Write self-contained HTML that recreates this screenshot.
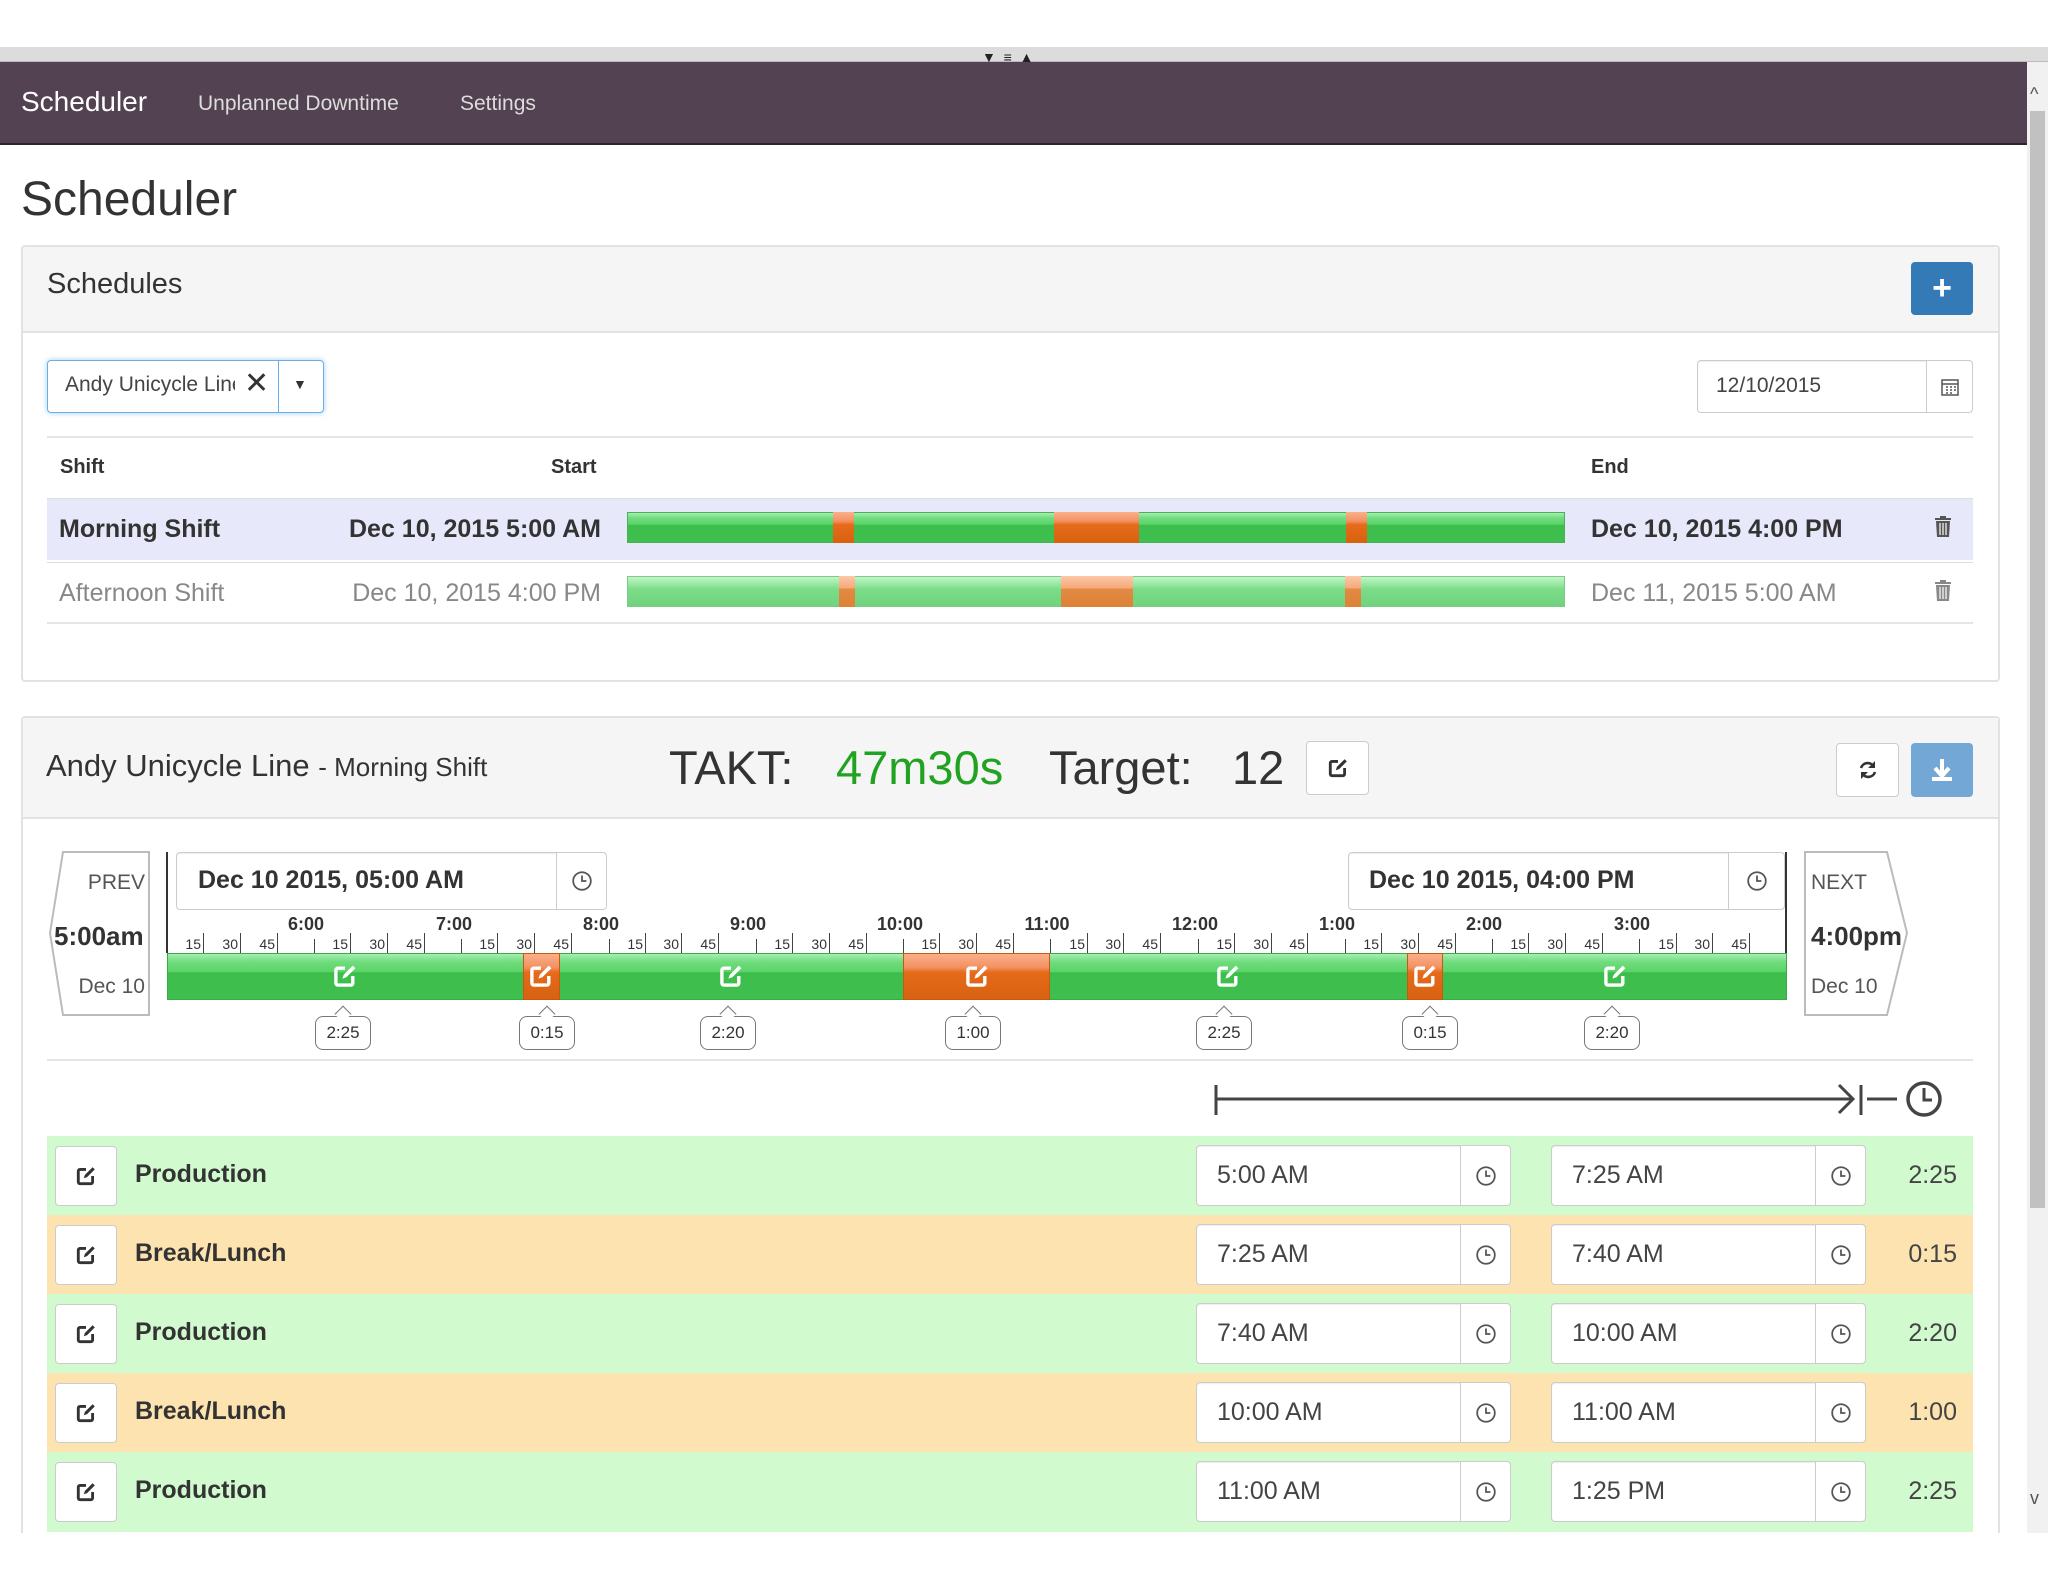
<!DOCTYPE html>
<html style="width:2048px;height:1582px;overflow:hidden"><head><meta charset="utf-8"><style>
*{box-sizing:border-box;margin:0;padding:0}
body{width:2048px;height:1582px;position:relative;overflow:hidden;background:#fff;font-family:"Liberation Sans",Arial,sans-serif;color:#333}
.a{position:absolute}
.nav{left:0;top:62px;width:2027px;height:83px;background:#534251;border-bottom:2px solid #2e2430}
.panel{border:2px solid #e2e2e2;border-radius:4px;background:#fff}
.ph{background:#f5f5f5;border-bottom:2px solid #e2e2e2}
.btn{border:1px solid #ccc;border-radius:4px;background:#fff;display:flex;align-items:center;justify-content:center}
.inp{border:1px solid #ccc;border-radius:4px;background:#fff;box-shadow:inset 0 1px 1px rgba(0,0,0,.08)}
.add{position:absolute;right:0;top:0;bottom:0;border-left:1px solid #ccc;display:flex;align-items:center;justify-content:center;background:#fff;border-radius:0 4px 4px 0}
.g{background:linear-gradient(#a6eeb0 0,#6fdc7c 18%,#5ad468 40%,#3dbd4c 41%,#3fbf4e 100%)}
.o{background:linear-gradient(#fbb08a 0,#f29060 30%,#e66a1a 41%,#d7620f 100%)}
.g2{background:linear-gradient(#c4f5c9 0,#8ee59a 30%,#7ddc8a 41%,#6fd37d 100%)}
.o2{background:linear-gradient(#fcc8a8 0,#f6a878 40%,#e28a44 41%,#dd8236 100%)}
.q{position:absolute;top:933px;width:30px;height:20px;text-align:right;padding-right:2px;font-size:14px;line-height:22px;border-right:1.5px solid #444;color:#333}
.ht{position:absolute;top:939px;width:0;height:14px;border-left:1.5px solid #444}
.hl{position:absolute;top:914px;width:80px;text-align:center;font-size:18px;font-weight:bold;color:#333}
.ico{position:absolute;top:963px;width:26px;height:26px;margin-left:-13px}
.bub{position:absolute;top:1016px;width:56px;height:34px;margin-left:-28px;border:1.5px solid #777;border-radius:8px;background:#fff;font-size:17px;text-align:center;line-height:31px}
.bub:before{content:"";position:absolute;left:21px;top:-9px;width:11px;height:11px;border-left:1.5px solid #777;border-top:1.5px solid #777;background:#fff;transform:rotate(45deg)}
.row{position:absolute;left:47px;width:1926px;height:79px}
.rg{background:#d1fbcf}.ro{background:#fde3b0}
.row .eb{position:absolute;left:8px;top:10px;width:62px;height:60px}
.row .lb{position:absolute;left:88px;top:0;line-height:77px;font-size:25px;font-weight:bold;color:#333}
.row .i1,.row .i2{position:absolute;top:9px;height:61px;width:315px}
.row .i1{left:1149px}.row .i2{left:1504px}
.row .add{width:50px}
.row .tx{position:absolute;left:20px;top:0;line-height:59px;font-size:25px;color:#444}
.row .du{position:absolute;right:16px;top:0;line-height:79px;font-size:25px;color:#444}
</style></head><body>
<svg width="0" height="0" style="position:absolute"><defs>
<symbol id="ed" viewBox="0 0 20 20"><path d="M10 4H4.5A1.5 1.5 0 0 0 3 5.5v10A1.5 1.5 0 0 0 4.5 17h10a1.5 1.5 0 0 0 1.5-1.5V10" fill="none" stroke="currentColor" stroke-width="2.6"/><path d="M8 12l1-3 7-7 2 2-7 7z" fill="currentColor"/></symbol>
<symbol id="ck" viewBox="0 0 20 20"><circle cx="10" cy="10" r="8" fill="none" stroke="currentColor" stroke-width="1.6"/><path d="M10 5v5h4" fill="none" stroke="currentColor" stroke-width="1.6"/></symbol>
<symbol id="tr" viewBox="0 0 20 24"><path d="M7 2h6v2h5v2H2V4h5z M3 7h14l-1 16H4z" fill="currentColor"/><path d="M7 9v12M10 9v12M13 9v12" stroke="#fff" stroke-width="1.2"/></symbol>
</defs></svg>

<div class="a" style="left:0;top:47px;width:2048px;height:15px;background:#dcdcdc;border-bottom:1px solid #bbb"></div>
<div class="a" style="left:982px;top:49px;font-size:14px;color:#222">▼&nbsp;&nbsp;≡&nbsp;&nbsp;▲</div>
<div class="a nav"></div>
<div class="a" style="left:21px;top:86px;font-size:28px;color:#fff">Scheduler</div>
<div class="a" style="left:198px;top:92px;font-size:21px;color:#ddd">Unplanned Downtime</div>
<div class="a" style="left:460px;top:92px;font-size:21px;color:#ddd">Settings</div>
<div class="a" style="left:2027px;top:62px;width:21px;height:1473px;background:#f1f1f1"></div>
<div class="a" style="left:2030px;top:111px;width:15px;height:1097px;background:#c1c1c1"></div>
<div class="a" style="left:2030px;top:84px;font-size:18px;color:#555">^</div>
<div class="a" style="left:2030px;top:1488px;font-size:18px;color:#555">v</div>

<div class="a" style="left:21px;top:172px;font-size:48px;color:#333">Scheduler</div>

<!-- panel 1 -->
<div class="a panel" style="left:21px;top:245px;width:1979px;height:437px"></div>
<div class="a ph" style="left:23px;top:247px;width:1975px;height:86px;border-radius:4px 4px 0 0"></div>
<div class="a" style="left:47px;top:268px;font-size:29px;color:#333">Schedules</div>
<div class="a" style="left:1911px;top:262px;width:62px;height:53px;background:#337ab7;border-radius:4px;color:#fff;font-size:34px;font-weight:bold;text-align:center;line-height:52px">+</div>

<div class="a inp" style="left:47px;top:360px;width:277px;height:53px;border-color:#66afe9;box-shadow:0 0 6px rgba(102,175,233,.6)"></div>
<div class="a" style="left:65px;top:373px;font-size:21px;color:#444;width:170px;overflow:hidden;white-space:nowrap">Andy Unicycle Line</div>
<div class="a" style="left:244px;top:366px;font-size:30px;color:#333">✕</div>
<div class="a" style="left:278px;top:361px;width:1px;height:51px;background:#66afe9"></div>
<div class="a" style="left:293px;top:376px;font-size:14px;color:#333">▼</div>

<div class="a inp" style="left:1697px;top:360px;width:276px;height:53px"><div class="add" style="width:46px;background:#fff"><svg width="20" height="20" viewBox="0 0 20 20"><rect x="2" y="3" width="16" height="15" fill="none" stroke="#555" stroke-width="1.5"/><path d="M2 7h16M6 10h2M10 10h2M14 10h2M6 13h2M10 13h2M14 13h2M6 16h2M10 16h2" stroke="#555" stroke-width="1.4"/></svg></div></div>
<div class="a" style="left:1716px;top:374px;font-size:21px;color:#444">12/10/2015</div>

<div class="a" style="left:47px;top:436px;width:1926px;height:2px;background:#e5e5e5"></div>
<div class="a" style="left:60px;top:456px;font-size:20px;font-weight:bold">Shift</div>
<div class="a" style="left:551px;top:456px;font-size:20px;font-weight:bold">Start</div>
<div class="a" style="left:1591px;top:456px;font-size:20px;font-weight:bold">End</div>

<div class="a" style="left:47px;top:498px;width:1926px;height:62px;background:#e8e8fb;border-top:1px solid #ddd"></div>
<div class="a" style="left:59px;top:515px;font-size:25px;font-weight:bold">Morning Shift</div>
<div class="a" style="left:300px;top:515px;width:301px;text-align:right;font-size:25px;font-weight:bold">Dec 10, 2015 5:00 AM</div>
<div class="a g" style="left:627px;top:512px;width:938px;height:31px;border:1px solid #49b057"></div>
<div class="a o" style="left:833px;top:512px;width:21px;height:31px"></div>
<div class="a o" style="left:1054px;top:512px;width:85px;height:31px"></div>
<div class="a o" style="left:1346px;top:512px;width:21px;height:31px"></div>
<div class="a" style="left:1591px;top:515px;font-size:25px;font-weight:bold">Dec 10, 2015 4:00 PM</div>
<svg class="a" style="left:1933px;top:512px;color:#555" width="20" height="28"><use href="#tr"/></svg>

<div class="a" style="left:47px;top:562px;width:1926px;height:62px;border-top:1px solid #ddd;border-bottom:2px solid #e5e5e5"></div>
<div class="a" style="left:59px;top:579px;font-size:25px;color:#888">Afternoon Shift</div>
<div class="a" style="left:300px;top:579px;width:301px;text-align:right;font-size:25px;color:#888">Dec 10, 2015 4:00 PM</div>
<div class="a g2" style="left:627px;top:576px;width:938px;height:31px;border:1px solid #7ccc88"></div>
<div class="a o2" style="left:839px;top:576px;width:16px;height:31px"></div>
<div class="a o2" style="left:1061px;top:576px;width:72px;height:31px"></div>
<div class="a o2" style="left:1345px;top:576px;width:16px;height:31px"></div>
<div class="a" style="left:1591px;top:579px;font-size:25px;color:#888">Dec 11, 2015 5:00 AM</div>
<svg class="a" style="left:1933px;top:576px;color:#888" width="20" height="28"><use href="#tr"/></svg>

<!-- panel 2 -->
<div class="a panel" style="left:21px;top:716px;width:1979px;height:866px;border-bottom:none;border-radius:4px 4px 0 0"></div>
<div class="a ph" style="left:23px;top:718px;width:1975px;height:101px;border-radius:4px 4px 0 0"></div>
<div class="a" style="left:46px;top:748px;font-size:31px;color:#333">Andy Unicycle Line <span style="font-size:26px">- Morning Shift</span></div>
<div class="a" style="left:669px;top:740px;font-size:47px;color:#333">TAKT:</div>
<div class="a" style="left:836px;top:740px;font-size:47px;color:#21a321">47m30s</div>
<div class="a" style="left:1049px;top:740px;font-size:47px;color:#333">Target:</div>
<div class="a" style="left:1232px;top:740px;font-size:47px;color:#333">12</div>
<div class="a btn" style="left:1306px;top:741px;width:63px;height:54px"><svg width="22" height="22" style="color:#333"><use href="#ed"/></svg></div>
<div class="a btn" style="left:1836px;top:743px;width:63px;height:54px"><svg width="24" height="24" viewBox="0 0 24 24"><path d="M18 9A7 7 0 0 0 5 10M6 15a7 7 0 0 0 13-1" fill="none" stroke="#333" stroke-width="2.6"/><path d="M19 3v7h-7z M5 21v-7h7z" fill="#333"/></svg></div>
<div class="a" style="left:1911px;top:743px;width:62px;height:54px;background:#72a7d6;border-radius:4px"><svg width="62" height="54"><path d="M31 16v16M24 25l7 8 7-8M21 36h20" stroke="#fff" stroke-width="4" fill="none"/></svg></div>

<!-- timeline -->
<svg class="a" style="left:48px;top:850px" width="104" height="168"><polygon points="15,2 101,2 101,165 15,165 2,83" fill="#fff" stroke="#bbb" stroke-width="2"/></svg>
<div class="a" style="left:60px;top:871px;width:85px;text-align:right;font-size:21px;color:#555">PREV</div>
<div class="a" style="left:54px;top:921px;font-size:26px;font-weight:bold;color:#333">5:00am</div>
<div class="a" style="left:60px;top:975px;width:85px;text-align:right;font-size:21px;color:#555">Dec 10</div>

<svg class="a" style="left:1803px;top:850px" width="108" height="168"><polygon points="2,2 84,2 104,83 84,165 2,165" fill="#fff" stroke="#bbb" stroke-width="2"/></svg>
<div class="a" style="left:1811px;top:871px;font-size:21px;color:#555">NEXT</div>
<div class="a" style="left:1811px;top:921px;font-size:26px;font-weight:bold;color:#333">4:00pm</div>
<div class="a" style="left:1811px;top:975px;font-size:21px;color:#555">Dec 10</div>

<div class="a" style="left:166px;top:852px;width:2px;height:101px;background:#333"></div>
<div class="a" style="left:1785px;top:852px;width:2px;height:101px;background:#333"></div>
<div class="a inp" style="left:176px;top:852px;width:431px;height:58px"><div class="add" style="width:50px"><svg width="22" height="22" style="color:#555"><use href="#ck"/></svg></div></div>
<div class="a" style="left:198px;top:866px;font-size:25px;font-weight:bold;color:#333">Dec 10 2015, 05:00 AM</div>
<div class="a inp" style="left:1348px;top:852px;width:437px;height:58px"><div class="add" style="width:56px"><svg width="22" height="22" style="color:#555"><use href="#ck"/></svg></div></div>
<div class="a" style="left:1369px;top:866px;font-size:25px;font-weight:bold;color:#333">Dec 10 2015, 04:00 PM</div>

<div class="hl" style="left:266px">6:00</div><div class="hl" style="left:414px">7:00</div><div class="hl" style="left:561px">8:00</div><div class="hl" style="left:708px">9:00</div><div class="hl" style="left:860px">10:00</div><div class="hl" style="left:1007px">11:00</div><div class="hl" style="left:1155px">12:00</div><div class="hl" style="left:1297px">1:00</div><div class="hl" style="left:1444px">2:00</div><div class="hl" style="left:1592px">3:00</div>
<div class="ht" style="left:314px"></div><div class="ht" style="left:461px"></div><div class="ht" style="left:609px"></div><div class="ht" style="left:756px"></div><div class="ht" style="left:903px"></div><div class="ht" style="left:1050px"></div><div class="ht" style="left:1198px"></div><div class="ht" style="left:1345px"></div><div class="ht" style="left:1492px"></div><div class="ht" style="left:1639px"></div>
<div class="q" style="left:174px">15</div><div class="q" style="left:211px">30</div><div class="q" style="left:248px">45</div>
<div class="q" style="left:321px">15</div><div class="q" style="left:358px">30</div><div class="q" style="left:395px">45</div>
<div class="q" style="left:468px">15</div><div class="q" style="left:505px">30</div><div class="q" style="left:542px">45</div>
<div class="q" style="left:616px">15</div><div class="q" style="left:652px">30</div><div class="q" style="left:689px">45</div>
<div class="q" style="left:763px">15</div><div class="q" style="left:800px">30</div><div class="q" style="left:837px">45</div>
<div class="q" style="left:910px">15</div><div class="q" style="left:947px">30</div><div class="q" style="left:984px">45</div>
<div class="q" style="left:1058px">15</div><div class="q" style="left:1094px">30</div><div class="q" style="left:1131px">45</div>
<div class="q" style="left:1205px">15</div><div class="q" style="left:1242px">30</div><div class="q" style="left:1278px">45</div>
<div class="q" style="left:1352px">15</div><div class="q" style="left:1389px">30</div><div class="q" style="left:1426px">45</div>
<div class="q" style="left:1499px">15</div><div class="q" style="left:1536px">30</div><div class="q" style="left:1573px">45</div>
<div class="q" style="left:1647px">15</div><div class="q" style="left:1683px">30</div><div class="q" style="left:1720px">45</div>

<div class="a g" style="left:167px;top:953px;width:1620px;height:47px;border:1px solid #3aa948"></div>
<div class="a o" style="left:523px;top:953px;width:37px;height:47px;border:1px solid #c85a10"></div>
<div class="a o" style="left:903px;top:953px;width:147px;height:47px;border:1px solid #c85a10"></div>
<div class="a o" style="left:1407px;top:953px;width:36px;height:47px;border:1px solid #c85a10"></div>
<svg class="ico" style="left:345px;color:#fff"><use href="#ed"/></svg>
<svg class="ico" style="left:541px;color:#fff"><use href="#ed"/></svg>
<svg class="ico" style="left:731px;color:#fff"><use href="#ed"/></svg>
<svg class="ico" style="left:977px;color:#fff"><use href="#ed"/></svg>
<svg class="ico" style="left:1228px;color:#fff"><use href="#ed"/></svg>
<svg class="ico" style="left:1425px;color:#fff"><use href="#ed"/></svg>
<svg class="ico" style="left:1615px;color:#fff"><use href="#ed"/></svg>
<div class="bub" style="left:343px">2:25</div>
<div class="bub" style="left:547px">0:15</div>
<div class="bub" style="left:728px">2:20</div>
<div class="bub" style="left:973px">1:00</div>
<div class="bub" style="left:1224px">2:25</div>
<div class="bub" style="left:1430px">0:15</div>
<div class="bub" style="left:1612px">2:20</div>

<div class="a" style="left:47px;top:1059px;width:1926px;height:2px;background:#e5e5e5"></div>
<svg class="a" style="left:1205px;top:1075px" width="750" height="50"><path d="M11 10v30M11 24h637M634 10l14 14-14 14M656 10v30M662 24h30" stroke="#444" stroke-width="3" fill="none"/><circle cx="719" cy="24" r="16" fill="none" stroke="#444" stroke-width="3.5"/><path d="M719 13v12h8" stroke="#444" stroke-width="3" fill="none"/></svg>

<!-- rows -->
<div class="row rg" style="top:1136px"><div class="eb btn"><svg width="22" height="22" style="color:#333"><use href="#ed"/></svg></div><div class="lb">Production</div><div class="i1 inp"><div class="tx">5:00 AM</div><div class="add"><svg width="22" height="22" style="color:#555"><use href="#ck"/></svg></div></div><div class="i2 inp"><div class="tx">7:25 AM</div><div class="add"><svg width="22" height="22" style="color:#555"><use href="#ck"/></svg></div></div><div class="du">2:25</div></div>
<div class="row ro" style="top:1215px"><div class="eb btn"><svg width="22" height="22" style="color:#333"><use href="#ed"/></svg></div><div class="lb">Break/Lunch</div><div class="i1 inp"><div class="tx">7:25 AM</div><div class="add"><svg width="22" height="22" style="color:#555"><use href="#ck"/></svg></div></div><div class="i2 inp"><div class="tx">7:40 AM</div><div class="add"><svg width="22" height="22" style="color:#555"><use href="#ck"/></svg></div></div><div class="du">0:15</div></div>
<div class="row rg" style="top:1294px"><div class="eb btn"><svg width="22" height="22" style="color:#333"><use href="#ed"/></svg></div><div class="lb">Production</div><div class="i1 inp"><div class="tx">7:40 AM</div><div class="add"><svg width="22" height="22" style="color:#555"><use href="#ck"/></svg></div></div><div class="i2 inp"><div class="tx">10:00 AM</div><div class="add"><svg width="22" height="22" style="color:#555"><use href="#ck"/></svg></div></div><div class="du">2:20</div></div>
<div class="row ro" style="top:1373px"><div class="eb btn"><svg width="22" height="22" style="color:#333"><use href="#ed"/></svg></div><div class="lb">Break/Lunch</div><div class="i1 inp"><div class="tx">10:00 AM</div><div class="add"><svg width="22" height="22" style="color:#555"><use href="#ck"/></svg></div></div><div class="i2 inp"><div class="tx">11:00 AM</div><div class="add"><svg width="22" height="22" style="color:#555"><use href="#ck"/></svg></div></div><div class="du">1:00</div></div>
<div class="row rg" style="top:1452px;height:80px"><div class="eb btn"><svg width="22" height="22" style="color:#333"><use href="#ed"/></svg></div><div class="lb">Production</div><div class="i1 inp"><div class="tx">11:00 AM</div><div class="add"><svg width="22" height="22" style="color:#555"><use href="#ck"/></svg></div></div><div class="i2 inp"><div class="tx">1:25 PM</div><div class="add"><svg width="22" height="22" style="color:#555"><use href="#ck"/></svg></div></div><div class="du">2:25</div></div>

<div class="a" style="left:0;top:1533px;width:2048px;height:49px;background:#fff"></div>
</body></html>
